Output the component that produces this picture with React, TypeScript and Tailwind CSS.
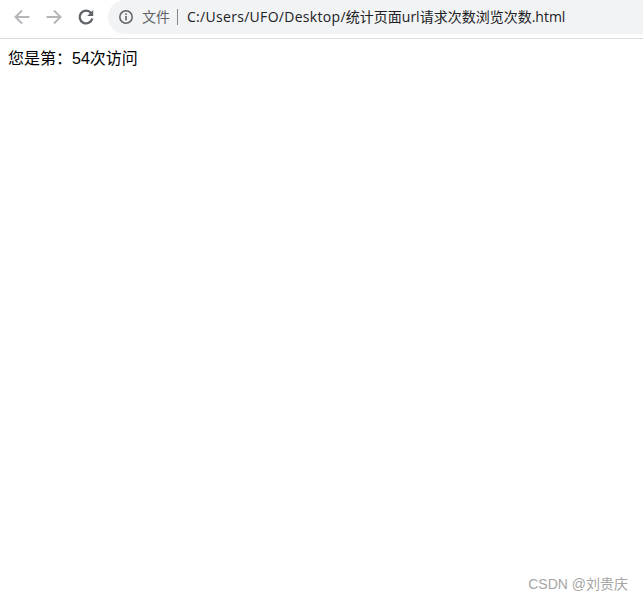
import React from "react";

const F = { fontFamily: '"Liberation Sans", "Noto Sans CJK SC", sans-serif' };
const U = { fontFamily: '"Open Sans", "Noto Sans CJK SC", sans-serif' };

export default function App() {
  return (
    <div className="w-[643px] h-[601px] bg-white flex flex-col overflow-hidden" style={F}>
      <div className="h-[39px] shrink-0 flex items-start border-b border-[#dadce0] bg-white">
        <div className="flex items-center h-[34px] pl-[12px] gap-[12px]">
          <svg width="20" height="20" viewBox="0 0 20 20" fill="none" stroke="#b4b6b9" strokeWidth="2">
            <path d="M17.5 10H3.5M10 3.5L3.5 10L10 16.5" />
          </svg>
          <svg width="20" height="20" viewBox="0 0 20 20" fill="none" stroke="#b4b6b9" strokeWidth="2">
            <path d="M2.5 10H16.5M10 3.5L16.5 10L10 16.5" />
          </svg>
          <svg width="20" height="20" viewBox="0 0 20 20" fill="none">
            <path d="M15.2 6.2A6.4 6.4 0 1 0 16.3 11.5" stroke="#5f6368" strokeWidth="2.3" />
            <path d="M17.2 3V9H11.2Z" fill="#5f6368" />
          </svg>
        </div>
        <div className="ml-[12px] flex-1 h-[34px] bg-[#f1f3f4] rounded-l-[17px] flex items-center pl-[10px]">
          <svg width="16" height="16" viewBox="0 0 16 16" fill="none">
            <circle cx="8" cy="8" r="6.2" stroke="#5f6368" strokeWidth="1.5" />
            <rect x="7.2" y="7" width="1.6" height="4.4" fill="#5f6368" />
            <rect x="7.2" y="4.4" width="1.6" height="1.6" fill="#5f6368" />
          </svg>
          <span className="ml-[8px] text-[14px] leading-[20px] text-[#5f6368]" style={U}>文件</span>
          <span className="ml-[7px] w-px h-[16px] bg-[#80868b]" />
          <span className="ml-[9px] text-[14px] leading-[20px] text-[#202124] whitespace-nowrap" style={U}>
            <span className="tracking-[0.3px]">C:/Users/UFO/Desktop/</span>统计页面url请求次数浏览次数.html
          </span>
        </div>
      </div>
      <div className="pl-[8px] pt-[9px] text-[16px] leading-[21px] text-black">您是第：54次访问</div>
      <div className="mt-auto pr-[15px] pb-[7px] text-right text-[14px] leading-[20px] text-[#a6a6a6]">CSDN @刘贵庆</div>
    </div>
  );
}
